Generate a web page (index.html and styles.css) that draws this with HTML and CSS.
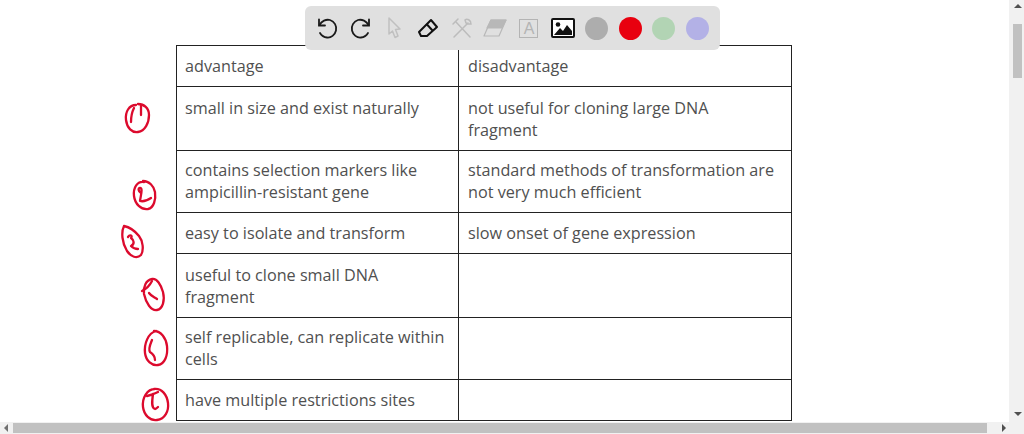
FILE: index.html
```html
<!DOCTYPE html>
<html lang="en">
<head>
<meta charset="utf-8">
<title>Advantages and disadvantages</title>
<link rel="stylesheet" href="styles.css">
</head>
<body>
<div class="viewport">
  <div class="row-main">
    <main class="canvas">
      <table class="sheet">
        <colgroup><col class="col-a"><col class="col-b"></colgroup>
        <tr class="r1"><td>advantage</td><td>disadvantage</td></tr>
        <tr class="r2"><td>small in size and exist naturally</td><td>not useful for cloning large DNA fragment</td></tr>
        <tr class="r3"><td>contains selection markers like ampicillin-resistant gene</td><td>standard methods of transformation are not very much efficient</td></tr>
        <tr class="r1"><td>easy to isolate and transform</td><td>slow onset of gene expression</td></tr>
        <tr class="r2"><td>useful to clone small DNA fragment</td><td></td></tr>
        <tr class="r3"><td>self replicable, can replicate within cells</td><td></td></tr>
        <tr class="r1"><td>have multiple restrictions sites</td><td></td></tr>
      </table>

      <svg class="ink" width="1009" height="422" viewBox="0 0 1009 422" fill="none" stroke="#dc0a2d" stroke-width="2.300" stroke-linecap="round" stroke-linejoin="round">
        <path d="M136 105C129 105 125 112 126 120C127 128 132 133 138 132C145 131 149 123 149 115C149 108 144 104 138 104"/>
        <path d="M134 108C132 112 131 118 131 122M141 106L141 115"/>
        <path d="M144 182C137 181 133 188 134 196C135 204 141 210 148 209C154 208 156 199 155 192C154 186 149 181 143 181"/>
        <path d="M141 193C138 191 138 188 140 188C143 188 141 194 140 201C144 202 148 200 151 198"/>
        <path d="M124 226C121 232 122 243 127 251C131 257 137 259 141 255C144 250 143 241 139 236C135 231 129 227 124 226"/>
        <path d="M128 237C130 234 133 236 131 238C134 240 135 244 131 246C133 248 136 249 138 249"/>
        <path d="M152 279C146 280 143 287 144 294C146 303 151 311 157 310C163 309 165 300 163 292C161 285 157 278 152 279"/>
        <path d="M142 291C146 289 150 285 152 281M149 293C151 296 154 297 157 299"/>
        <path d="M156 331C148 333 144 344 145 353C146 361 152 366 158 365C165 364 168 355 167 346C166 338 161 331 154 331"/>
        <path d="M152 340C150 345 148 349 150 352C153 354 155 356 155 360"/>
        <path d="M155 389C147 389 142 398 143 407C144 415 150 421 157 420C165 419 169 411 168 403C167 395 162 388 154 389"/>
        <path d="M147 396C152 395 156 393 158 392M153 394C152 401 151 408 155 409C156 409 157 408 158 407"/>
      </svg>

      <nav class="toolbar">
        <span class="tool"><svg width="24" height="24" viewBox="0 0 24 24" fill="none" stroke="#1a1a1a" stroke-width="1.800" stroke-linecap="round"><path d="M4 3.500V9.500H10"/><path d="M4.500 9C6.500 5 11 3 15 4C19.500 5.500 22 10 21 14.500C20 19 16 22 12 21.500C9 21.200 6.500 19.500 5 17"/></svg></span>
        <span class="tool"><svg width="24" height="24" viewBox="0 0 24 24" fill="none" stroke="#1a1a1a" stroke-width="1.800" stroke-linecap="round"><path d="M20 3.500V9.500H14"/><path d="M19.500 9C17.500 5 13 3 9 4C4.500 5.500 2 10 3 14.500C4 19 8 22 12 21.500C15 21.200 17.500 19.500 19 17"/></svg></span>
        <span class="tool"><svg width="24" height="24" viewBox="0 0 24 24" fill="none" stroke="#c0c0c0" stroke-width="1.500" stroke-linejoin="round"><path d="M7 2L18 13L13.500 13.500L16 20L13 21.500L10.500 15L7 18Z"/></svg></span>
        <span class="tool"><svg width="24" height="24" viewBox="0 0 24 24" fill="none" stroke="#111" stroke-width="2" stroke-linejoin="round"><path d="M15 4L21 11L11 20H5L3 16Z"/><path d="M10.500 8L17 15"/></svg></span>
        <span class="tool"><svg width="24" height="24" viewBox="0 0 24 24" fill="none" stroke="#bcbcbc" stroke-width="1.500" stroke-linecap="round"><path d="M6 6L20 21M18 7L4 21"/><path d="M3 8L8 3M15 4C17 2 21 4 21 8L18 8L16 7Z"/></svg></span>
        <span class="tool"><svg width="26" height="24" viewBox="0 0 26 24" fill="none" stroke="#b8b8b8" stroke-width="1.200" stroke-linejoin="round"><path d="M9 4H24L17 20H2Z"/><path d="M9 4H24L20 12H5Z" fill="#b8b8b8"/></svg></span>
        <span class="tool"><span class="text-tool">A</span></span>
        <span class="tool"><svg width="24" height="20" viewBox="0 0 24 20"><rect x="1" y="1" width="22" height="18" rx="1" fill="#fff" stroke="#111" stroke-width="2"/><circle cx="7" cy="6.500" r="2.300" fill="#111"/><path d="M3 17L9 10L12 13L16 7L21 13V17Z" fill="#111"/></svg></span>
        <span class="tool"><span class="dot dot-grey"></span></span>
        <span class="tool"><span class="dot dot-red"></span></span>
        <span class="tool"><span class="dot dot-green"></span></span>
        <span class="tool"><span class="dot dot-violet"></span></span>
      </nav>
    </main>
    <aside class="vbar">
      <span class="arrow-up"></span>
      <span class="vthumb"></span>
      <span class="arrow-down"></span>
    </aside>
  </div>
  <div class="hbar">
    <span class="arrow-left"></span>
    <span class="hthumb"></span>
    <span class="arrow-right"></span>
  </div>
</div>
</body>
</html>
```
FILE: styles.css
```css
* { box-sizing: border-box; }
html, body { margin: 0; height: 100%; overflow: hidden; background: #fff; }
.viewport { width: 1024px; height: 434px; display: flex; flex-direction: column; }
.row-main { flex: 1; min-height: 0; display: flex; }
.canvas { position: relative; flex: 1; padding: 45px 0 0 176px; overflow: hidden; }

.sheet {
  border-collapse: collapse;
  table-layout: fixed;
  width: 615px;
  font: 16.200px/22px "Open Sans", "Liberation Sans", sans-serif;
  color: #505050;
}
.col-a { width: 282px; }
.col-b { width: 333px; }
.sheet td {
  border: 1.600px solid #222;
  padding: 9px 8px 8px;
  vertical-align: top;
}
.sheet td + td { padding-left: 9px; padding-right: 14px; }
.r1 { height: 41px; }
.r2 { height: 64px; }
.r3 { height: 62px; }
.sheet .r2 td { padding-top: 10px; }
.sheet .r3 td { padding-top: 8px; }

.ink { position: absolute; left: 0; top: 0; pointer-events: none; }

.toolbar {
  position: absolute;
  left: 305px;
  top: 6px;
  width: 415px;
  height: 44px;
  padding: 0 5px;
  display: flex;
  align-items: center;
  background: #e0e0e0;
  border-radius: 6px;
}
.tool { width: 33.700px; display: flex; justify-content: center; align-items: center; }
.text-tool {
  width: 19px; height: 19px;
  border: 1px solid #b4b4b4;
  color: #b4b4b4;
  font: 16px/17px "Liberation Sans", sans-serif;
  text-align: center;
}
.dot { width: 23px; height: 23px; border-radius: 50%; }
.dot-grey { background: #adadad; }
.dot-red { background: #e8000f; }
.dot-green { background: #b2d4b4; }
.dot-violet { background: #b3b1e6; }

.vbar { width: 15px; padding-left: 2px; background: #f1f1f1; display: flex; flex-direction: column; align-items: center; }
.arrow-up { margin-top: 4px; border: 4px solid transparent; border-top: 0; border-bottom: 4px solid #505050; }
.vthumb { margin-top: 16px; width: 9px; height: 54px; background: #c1c1c1; }
.arrow-down { margin-top: auto; margin-bottom: 6px; border: 4px solid transparent; border-bottom: 0; border-top: 4px solid #505050; }

.hbar { height: 12px; background: #f1f1f1; display: flex; align-items: center; padding: 0 6px 0 4px; }
.arrow-left { border: 4px solid transparent; border-left: 0; border-right: 4px solid #707070; }
.hthumb { margin-left: 5px; width: 974px; height: 10px; background: #c1c1c1; }
.arrow-right { margin-left: 15px; border: 4px solid transparent; border-right: 0; border-left: 4px solid #505050; }
```
